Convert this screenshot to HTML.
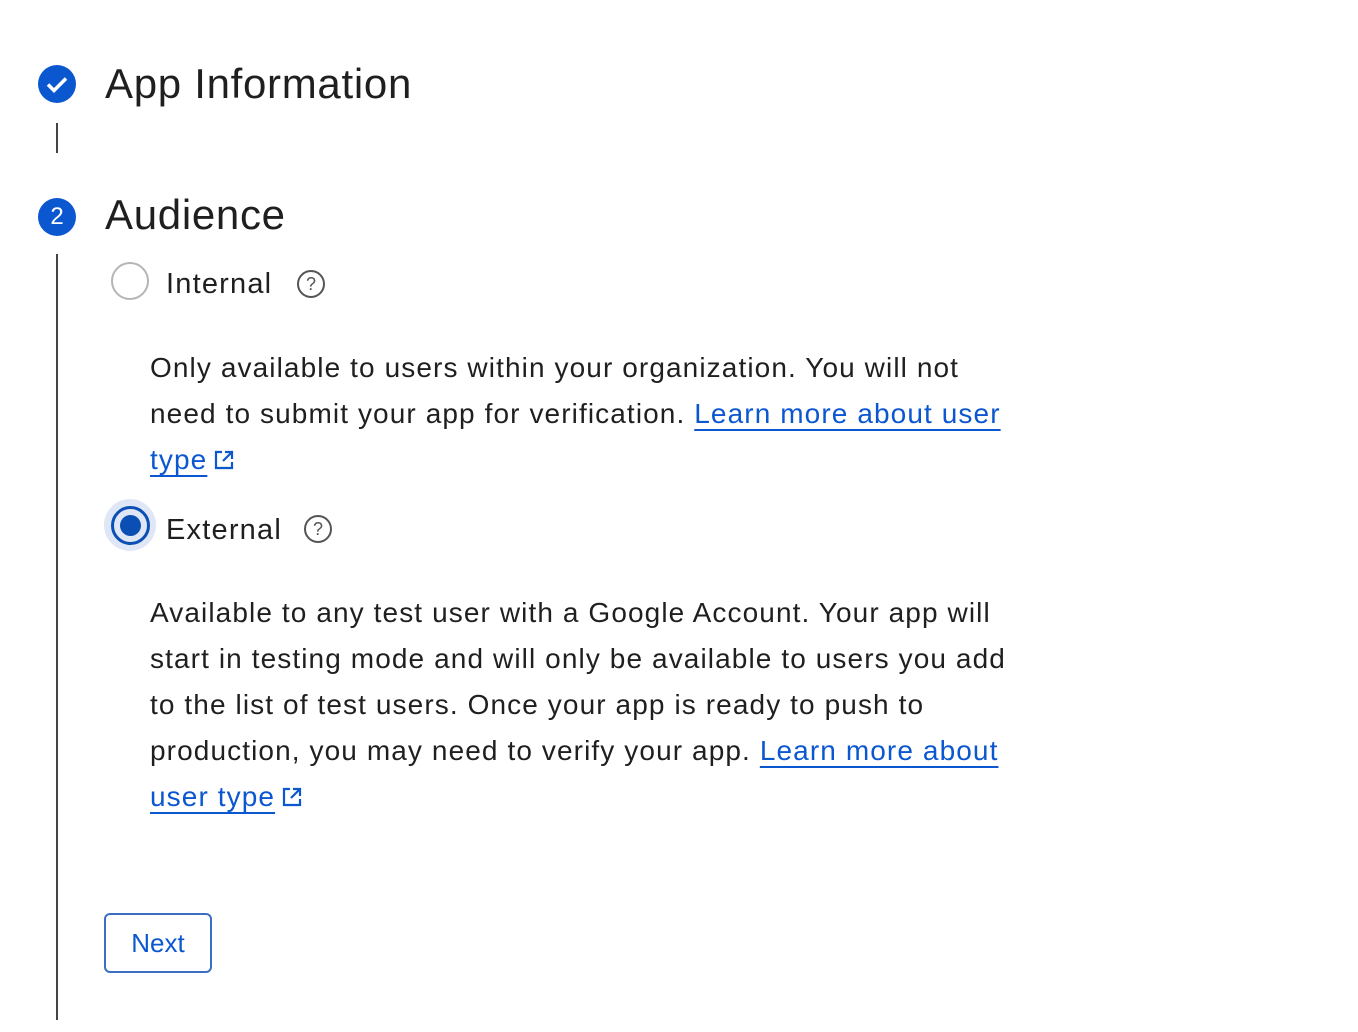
<!DOCTYPE html>
<html><head><style>
body{margin:0;width:1358px;height:1032px;background:#fff;font-family:"Liberation Sans",Arial,sans-serif;color:#1f1f1f;position:relative;overflow:hidden}
.a{position:absolute;white-space:nowrap}
.h{font-size:42px;line-height:50px;color:#1f1f1f;letter-spacing:0.7px}
.t{font-size:28px;line-height:46px;left:150px;letter-spacing:1.1px}
.l{color:#0b57d0;text-decoration:underline;text-decoration-thickness:2px;text-underline-offset:6px}
.vl{position:absolute;left:56px;width:2px;background:#444}
.c{position:absolute;border-radius:50%;background:#0b57d0;color:#fff;text-align:center}
.q{position:absolute;width:24px;height:24px;border:2px solid #555;border-radius:50%;font-size:18px;line-height:24px;text-align:center;color:#555}
</style></head><body>
<div class="c" style="left:38px;top:65px;width:38px;height:38px">
<svg width="38" height="38" viewBox="0 0 38 38"><path d="M10 19.5l6 6 12-12" stroke="#fff" stroke-width="3.5" fill="none"/></svg></div>
<div class="a h" style="left:105px;top:59px">App Information</div>
<div class="vl" style="top:123px;height:30px"></div>
<div class="c" style="left:38px;top:198px;width:38px;height:38px;font-size:24px;line-height:38px">2</div>
<div class="a h" style="left:105px;top:190px">Audience</div>
<div class="vl" style="top:254px;height:766px"></div>

<div class="a" style="left:111px;top:262px;width:34px;height:34px;border:2.5px solid #b5b5b5;border-radius:50%"></div>
<div class="a" style="left:166px;top:264px;font-size:29px;line-height:40px;letter-spacing:1.2px">Internal</div>
<div class="q" style="left:297px;top:270px">?</div>

<div class="a t" style="top:345px">Only available to users within your organization. You will not</div>
<div class="a t" style="top:391px">need to submit your app for verification. <span class="l">Learn more about user</span></div>
<div class="a t" style="top:437px"><span class="l">type</span><svg width="22" height="22" viewBox="0 0 22 22" style="vertical-align:-2px;margin-left:6px"><path d="M9 3H3v16h16v-6M12 3h7v7M19 3l-9 9" stroke="#0b57d0" stroke-width="2.2" fill="none"/></svg></div>

<div class="a" style="left:104px;top:499px;width:52px;height:52px;border-radius:50%;background:#dfe6f5"></div>
<div class="a" style="left:111px;top:506px;width:33px;height:33px;border:3px solid #0b4fb5;border-radius:50%"></div>
<div class="a" style="left:120px;top:515px;width:21px;height:21px;background:#0b4fb5;border-radius:50%"></div>
<div class="a" style="left:166px;top:510px;font-size:29px;line-height:40px;letter-spacing:1.2px">External</div>
<div class="q" style="left:304px;top:515px">?</div>

<div class="a t" style="top:590px">Available to any test user with a Google Account. Your app will</div>
<div class="a t" style="top:636px">start in testing mode and will only be available to users you add</div>
<div class="a t" style="top:682px">to the list of test users. Once your app is ready to push to</div>
<div class="a t" style="top:728px">production, you may need to verify your app. <span class="l">Learn more about</span></div>
<div class="a t" style="top:774px"><span class="l">user type</span><svg width="22" height="22" viewBox="0 0 22 22" style="vertical-align:-2px;margin-left:6px"><path d="M9 3H3v16h16v-6M12 3h7v7M19 3l-9 9" stroke="#0b57d0" stroke-width="2.2" fill="none"/></svg></div>

<div class="a" style="left:104px;top:913px;width:104px;height:56px;border:2px solid #3a6fc4;border-radius:6px;color:#0b57d0;font-size:26px;line-height:56px;text-align:center">Next</div>
</body></html>
